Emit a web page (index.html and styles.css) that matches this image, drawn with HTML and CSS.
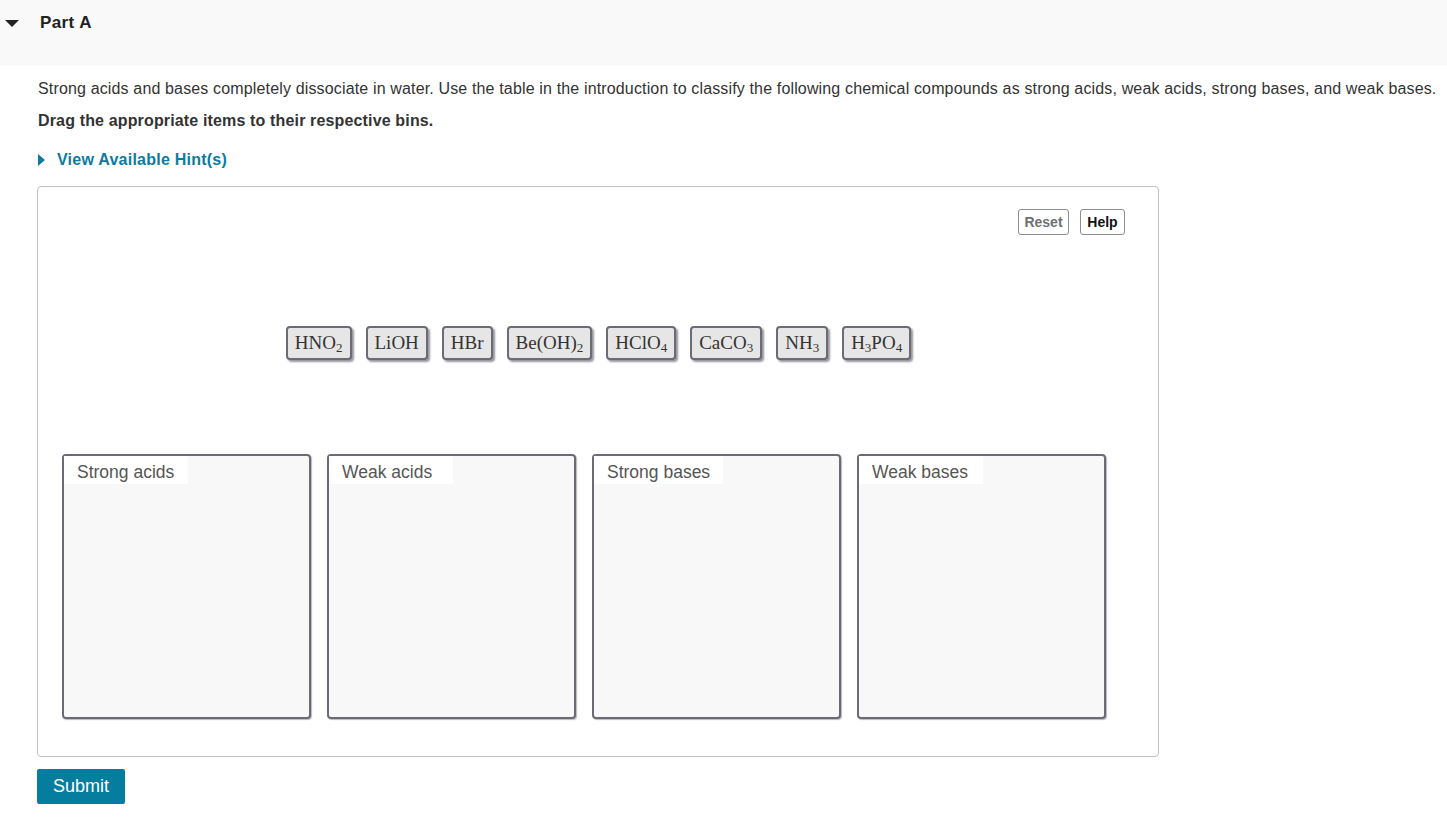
FILE: index.html
```html
<!DOCTYPE html>
<html>
<head>
<meta charset="utf-8">
<link rel="stylesheet" href="styles.css">
</head>
<body>
<div class="part-header">
  <span class="caret-down"></span>
  <span class="part-title">Part A</span>
</div>
<div class="content">
  <p class="intro">Strong acids and bases completely dissociate in water. Use the table in the introduction to classify the following chemical compounds as strong acids, weak acids, strong bases, and weak bases.</p>
  <p class="instr">Drag the appropriate items to their respective bins.</p>
  <div class="hint"><span class="caret-right"></span><span>View Available Hint(s)</span></div>
  <div class="panel">
    <div class="tools">
      <button class="tbtn reset">Reset</button>
      <button class="tbtn help">Help</button>
    </div>
    <div class="tiles">
      <div class="tile"><span>HNO<sub>2</sub></span></div>
      <div class="tile"><span>LiOH</span></div>
      <div class="tile"><span>HBr</span></div>
      <div class="tile"><span>Be(OH)<sub>2</sub></span></div>
      <div class="tile"><span>HClO<sub>4</sub></span></div>
      <div class="tile"><span>CaCO<sub>3</sub></span></div>
      <div class="tile"><span>NH<sub>3</sub></span></div>
      <div class="tile"><span>H<sub>3</sub>PO<sub>4</sub></span></div>
    </div>
    <div class="bins">
      <div class="bin"><div class="bin-label">Strong acids</div></div>
      <div class="bin"><div class="bin-label">Weak acids</div></div>
      <div class="bin"><div class="bin-label">Strong bases</div></div>
      <div class="bin"><div class="bin-label">Weak bases</div></div>
    </div>
  </div>
  <button class="submit">Submit</button>
</div>
</body>
</html>
```
FILE: styles.css
```css
body {
  margin: 0;
  font-family: "Liberation Sans", Arial, sans-serif;
  color: #333;
  background: #fff;
}
.part-header {
  height: 65px;
  background: #f9f9f9;
  display: flex;
  align-items: flex-start;
}
.caret-down {
  width: 0;
  height: 0;
  border-left: 7px solid transparent;
  border-right: 7px solid transparent;
  border-top: 7px solid #222;
  margin: 20px 0 0 5px;
}
.part-title {
  font-weight: bold;
  font-size: 17px;
  letter-spacing: 0.4px;
  color: #222;
  margin: 13px 0 0 21px;
}
.content {
  padding-left: 37px;
}
.intro {
  margin: 14px 0 0 1px;
  font-size: 16px;
  letter-spacing: 0.15px;
  line-height: 20px;
  color: #333;
  white-space: nowrap;
}
.instr {
  margin: 12px 0 0 1px;
  font-size: 16px;
  letter-spacing: 0.15px;
  line-height: 20px;
  font-weight: bold;
  color: #333;
}
.hint {
  margin: 20px 0 0 1px;
  display: flex;
  align-items: center;
  font-size: 16px;
  letter-spacing: 0.24px;
  font-weight: bold;
  color: #0b7ca0;
  height: 18px;
}
.caret-right {
  width: 0;
  height: 0;
  border-top: 6px solid transparent;
  border-bottom: 6px solid transparent;
  border-left: 7px solid #0b7ca0;
  margin-right: 12px;
}
.panel {
  margin-top: 17px;
  width: 1120px;
  height: 569px;
  border: 1px solid #c2c2c2;
  border-radius: 4px;
  box-sizing: content-box;
}
.tools {
  display: flex;
  justify-content: flex-end;
  gap: 11px;
  padding: 22px 33px 0 0;
}
.tbtn {
  font-family: "Liberation Sans", Arial, sans-serif;
  font-weight: bold;
  font-size: 14px;
  background: #fff;
  border: 1px solid #8a8f94;
  border-radius: 3px;
  height: 26px;
  padding: 0 5px;
  box-sizing: border-box;
}
.reset { color: #707070; width: 51px; }
.help { color: #111; width: 45px; }
.tiles {
  display: flex;
  justify-content: center;
  gap: 14px;
  margin-top: 91px;
  padding-left: 1px;
}
.tile {
  font-family: "Liberation Serif", "Times New Roman", serif;
  font-size: 19px;
  color: #333;
  background: #e6e6e6;
  border: 2px solid #6b6b78;
  border-radius: 4px;
  height: 34px;
  box-sizing: border-box;
  padding: 0 7px;
  display: flex;
  align-items: center;
  box-shadow: 2px 2px 2px rgba(80, 80, 90, 0.6);
}
.tile sub {
  font-size: 13px;
  position: relative;
  top: 3px;
  vertical-align: baseline;
  line-height: 1;
}
.bins {
  display: flex;
  gap: 16px;
  margin-top: 94px;
  padding-left: 24px;
}
.bin {
  width: 249px;
  height: 265px;
  box-sizing: border-box;
  border: 2px solid #6b6b78;
  border-radius: 4px;
  background: #f8f8f8;
  box-shadow: 1px 1px 1px rgba(80, 80, 90, 0.4);
}
.bin-label {
  display: inline-block;
  background: #fff;
  color: #555;
  font-size: 17.5px;
  line-height: 28px;
  padding: 2px 13px 0 13px;
  height: 28px;
  box-sizing: border-box;
  min-width: 124px;
}
.submit {
  margin-top: 12px;
  background: #057d9f;
  color: #fff;
  font-family: "Liberation Sans", Arial, sans-serif;
  font-size: 18px;
  border: none;
  border-radius: 2px;
  width: 88px;
  height: 35px;
}
```
